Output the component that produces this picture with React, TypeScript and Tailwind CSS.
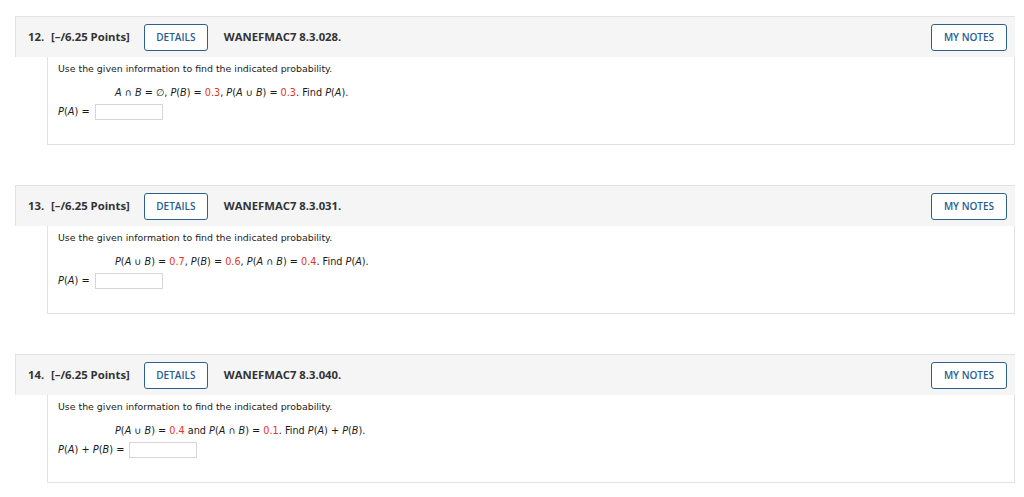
const red = "text-[#e8321c]";

function V({ children }: { children: React.ReactNode }) {
  return <i>{children}</i>;
}

type Q = {
  num: string;
  code: string;
  math: React.ReactNode;
  label: React.ReactNode;
};

const questions: Q[] = [
  {
    num: "12.",
    code: "WANEFMAC7 8.3.028.",
    math: (
      <>
        <V>A</V> ∩ <V>B</V> = ∅, <V>P</V>(<V>B</V>) = <span className={red}>0.3</span>, <V>P</V>(<V>A</V> ∪ <V>B</V>) ={" "}
        <span className={red}>0.3</span>. Find <V>P</V>(<V>A</V>).
      </>
    ),
    label: (
      <>
        <V>P</V>(<V>A</V>) =
      </>
    ),
  },
  {
    num: "13.",
    code: "WANEFMAC7 8.3.031.",
    math: (
      <>
        <V>P</V>(<V>A</V> ∪ <V>B</V>) = <span className={red}>0.7</span>, <V>P</V>(<V>B</V>) = <span className={red}>0.6</span>,{" "}
        <V>P</V>(<V>A</V> ∩ <V>B</V>) = <span className={red}>0.4</span>. Find <V>P</V>(<V>A</V>).
      </>
    ),
    label: (
      <>
        <V>P</V>(<V>A</V>) =
      </>
    ),
  },
  {
    num: "14.",
    code: "WANEFMAC7 8.3.040.",
    math: (
      <>
        <V>P</V>(<V>A</V> ∪ <V>B</V>) = <span className={red}>0.4</span> and <V>P</V>(<V>A</V> ∩ <V>B</V>) ={" "}
        <span className={red}>0.1</span>. Find <V>P</V>(<V>A</V>) + <V>P</V>(<V>B</V>).
      </>
    ),
    label: (
      <>
        <V>P</V>(<V>A</V>) + <V>P</V>(<V>B</V>) =
      </>
    ),
  },
];

function Question({ q }: { q: Q }) {
  return (
    <div className="w-[1000px]">
      <div className="h-[41px] flex items-center bg-[#f5f5f5] border-t border-l border-[#e2e2e2] pl-[12px] pr-[8px] font-['Open_Sans',sans-serif]">
        <span className="text-[11.3px] font-bold text-[#333] w-[23px]">{q.num}</span>
        <span className="text-[11.3px] font-bold text-[#333]">[–/6.25 Points]</span>
        <button className="ml-[14px] h-[27px] w-[64px] border-[1.5px] border-[#2d5f8f] rounded-[3px] text-[10px] font-semibold text-[#2a5d8f] bg-white">
          DETAILS
        </button>
        <span className="ml-[16px] text-[11.3px] font-bold text-[#333]">{q.code}</span>
        <button className="ml-auto h-[27px] w-[76px] border-[1.5px] border-[#2d5f8f] rounded-[3px] text-[10px] font-semibold text-[#2a5d8f] bg-white">
          MY NOTES
        </button>
      </div>
      <div className="ml-[32px] h-[88px] border-l border-b border-r border-[#e2e2e2] bg-white pl-[10px] pt-[5px] font-['DejaVu_Sans',sans-serif] text-[9.4px] text-[#1a1a1a]">
        <div className="h-[14px] leading-[14px]">Use the given information to find the indicated probability.</div>
        <div className="mt-[10px] h-[14px] leading-[14px] pl-[57px] text-[9.7px]">{q.math}</div>
        <div className="mt-[4px] flex items-center gap-[5px]">
          <span className="text-[9.8px]">{q.label}</span>
          <span className="inline-block w-[68px] h-[16px] border border-[#d6d6d6] bg-white" />
        </div>
      </div>
    </div>
  );
}

export default function App() {
  return (
    <div className="w-[1024px] h-[497px] bg-white pl-[15px] pt-[16px] flex flex-col gap-[40px]">
      {questions.map((q) => (
        <Question key={q.num} q={q} />
      ))}
    </div>
  );
}
